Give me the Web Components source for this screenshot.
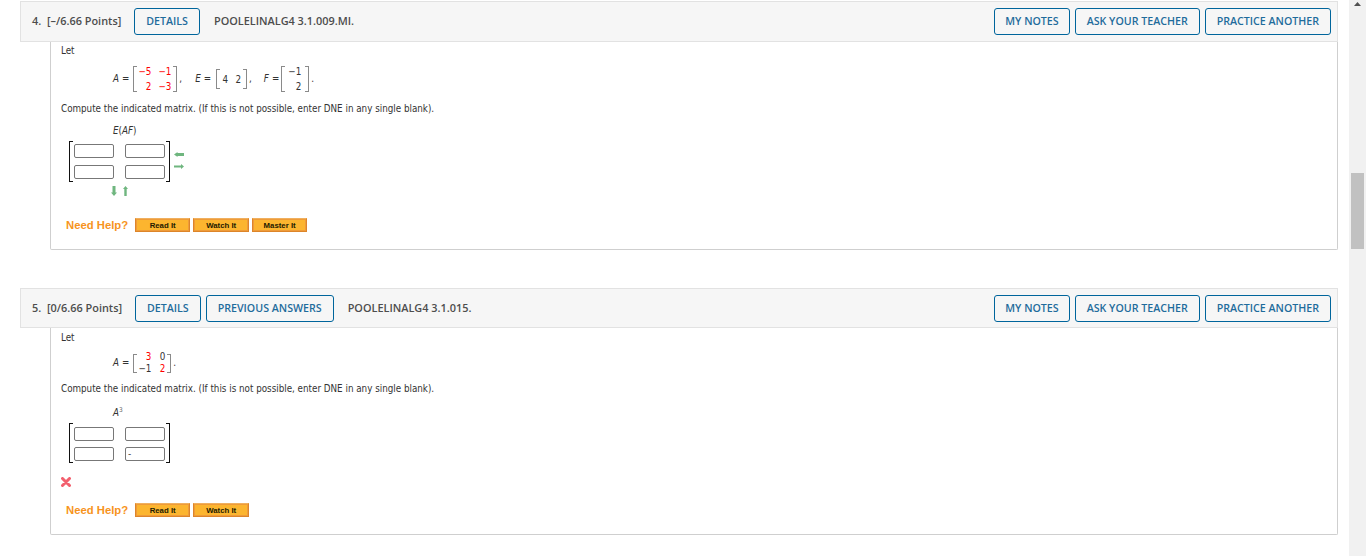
<!DOCTYPE html>
<html>
<head>
<meta charset="utf-8">
<title>Questions</title>
<style>
html, body { margin: 0; padding: 0; height: 556px; overflow: hidden; background: #fff; }
body { display: flex; font-family: "DejaVu Sans", sans-serif; }
main { flex: 1; min-width: 0; }
</style>
</head>
<body>
<main>
  <question-card style="--top:1px;--head:39px;--pad:2px" num="4." points="[–/6.66 Points]" code="POOLELINALG4 3.1.009.MI." body-height="208">
    <plain-text style="--h:17px">Let</plain-text>
    <formula-row style="--h:36px">
      <math-var>A =</math-var><math-matrix style="--gap:4px" tracks="12px 12px" gap="8" pad="6" cells="r:−5,r:−1,r:2,r:−3"></math-matrix><math-sep>,</math-sep>
      <math-var style="--ml:13px">E =</math-var><math-matrix style="--gap:5px" short tracks="6px 6px" gap="7" pad="6" cells="k:4,k:2"></math-matrix><math-sep>,</math-sep>
      <math-var style="--ml:12px">F =</math-var><math-matrix style="--gap:2px" tracks="12px" gap="0" pad="8" cells="k:−1,k:2"></math-matrix><math-sep>.</math-sep>
    </formula-row>
    <plain-text style="--mt:5px">Compute the indicated matrix. (If this is not possible, enter DNE in any single blank).</plain-text>
    <plain-text style="--mt:8px;--ml:52px"><i>E</i>(<i>AF</i>)</plain-text>
    <answer-matrix style="--mt:3px" arrows></answer-matrix>
    <help-row style="--mt:22px" links="Read It,Watch It,Master It"></help-row>
  </question-card>

  <question-card style="--top:38px;--head:38px;--pad:3px" num="5." points="[0/6.66 Points]" code="POOLELINALG4 3.1.015." prev body-height="207">
    <plain-text style="--h:17px">Let</plain-text>
    <formula-row style="--h:30px">
      <math-var>A =</math-var><math-matrix style="--gap:4px" tight tracks="12px 6px" gap="8" pad="6" cells="r:3,k:0,k:−1,r:2"></math-matrix><math-sep>.</math-sep>
    </formula-row>
    <plain-text style="--mt:4px">Compute the indicated matrix. (If this is not possible, enter DNE in any single blank).</plain-text>
    <plain-text style="--mt:10px;--ml:52px"><i>A</i><sup>3</sup></plain-text>
    <answer-matrix style="--mt:3px" last-value="-"></answer-matrix>
    <wrong-mark></wrong-mark>
    <help-row style="--mt:17px" links="Read It,Watch It"></help-row>
  </question-card>
</main>
<page-scrollbar></page-scrollbar>

<script>
// small helper, every element gets its own open shadow root
const shadow = (el, html) => {
  el.attachShadow({ mode: 'open' }).innerHTML = html;
};
const BODY_FONT = '9.75px/14px "DejaVu Sans Condensed", "DejaVu Sans", sans-serif';

class NavButton extends HTMLElement {
  connectedCallback() {
    shadow(this, `<style>
      :host { display: block; }
      a { display: flex; align-items: center; height: 25px; padding: 0 var(--px, 11px); border: 1px solid #00659c; border-radius: 3px;
          color: #1f6c9c; font: 600 10.65px/1 "Open Sans", sans-serif; white-space: nowrap; }
    </style><a><slot></slot></a>`);
  }
}
customElements.define('nav-button', NavButton);

class QuestionCard extends HTMLElement {
  connectedCallback() {
    const prev = this.hasAttribute('prev') ? '<nav-button style="margin-left:5px">PREVIOUS ANSWERS</nav-button>' : '';
    shadow(this, `<style>
      :host { display: block; margin: var(--top) 11px 0 20px; }
      header { display: flex; align-items: center; height: var(--head); padding: 0 6px 0 11px; background: #f6f6f6;
               border: 1px solid #e2e2e2; color: #4d4d4d; font: 600 10.9px/1 "Open Sans", sans-serif; }
      .num { width: 15px; }
      .pts { margin-right: 13px; white-space: nowrap; }
      .code { margin-left: 14px; white-space: nowrap; }
      .right { display: flex; gap: 5px; margin-left: auto; }
      section { margin-left: 30px; height: ${this.getAttribute('body-height')}px; padding: var(--pad) 0 0 10px; box-sizing: border-box;
                border: solid #cfcfcf; border-width: 0 1px 1px 1px; border-radius: 0 0 2px 2px; }
    </style>
    <header>
      <span class="num">${this.getAttribute('num')}</span>
      <span class="pts">${this.getAttribute('points')}</span>
      <nav-button>DETAILS</nav-button>${prev}
      <span class="code">${this.getAttribute('code')}</span>
      <div class="right">
        <nav-button style="--px:10px">MY NOTES</nav-button>
        <nav-button>ASK YOUR TEACHER</nav-button>
        <nav-button>PRACTICE ANOTHER</nav-button>
      </div>
    </header>
    <section><slot></slot></section>`);
  }
}
customElements.define('question-card', QuestionCard);

class PlainText extends HTMLElement {
  connectedCallback() {
    shadow(this, `<style>
      :host { display: block; height: var(--h, 14px); margin: var(--mt, 0) 0 0 var(--ml, 0);
              font: ${BODY_FONT}; color: #333; white-space: nowrap; }
      ::slotted(sup) { font-size: 6.5px; line-height: 0; color: #666; }
    </style><slot></slot>`);
  }
}
customElements.define('plain-text', PlainText);

class FormulaRow extends HTMLElement {
  connectedCallback() {
    shadow(this, `<style>
      :host { display: flex; align-items: center; height: var(--h); margin: 0 0 0 52px; color: #333; font: ${BODY_FONT}; }
    </style><slot></slot>`);
  }
}
customElements.define('formula-row', FormulaRow);

class MathVar extends HTMLElement {
  connectedCallback() {
    const [name, eq] = this.textContent.split(' ');
    shadow(this, `<style>
      :host { display: block; margin-left: var(--ml, 0); white-space: nowrap; }
      i { margin-right: 3px; }
    </style><i>${name}</i>${eq}`);
  }
}
customElements.define('math-var', MathVar);

class MathSep extends HTMLElement {
  connectedCallback() {
    shadow(this, `<style>:host { display: block; margin-left: 2px; }</style><slot></slot>`);
  }
}
customElements.define('math-sep', MathSep);

class MathMatrix extends HTMLElement {
  connectedCallback() {
    const cells = this.getAttribute('cells').split(',').map(c => {
      const [col, val] = c.split(':');
      return `<span style="color:${col === 'r' ? '#f00' : '#333'}">${val}</span>`;
    }).join('');
    const short = this.hasAttribute('short');
    const tight = this.hasAttribute('tight');
    shadow(this, `<style>
      :host { display: block; margin-left: var(--gap); }
      .m { display: grid; grid-template-columns: ${this.getAttribute('tracks')}; column-gap: ${this.getAttribute('gap')}px;
           align-items: center; justify-items: end; align-content: center; white-space: nowrap;
           height: ${short ? 20 : tight ? 19 : 26}px; padding: 0 ${this.getAttribute('pad')}px; position: relative; box-sizing: border-box;
           font: 9.75px/${tight ? 12 : 15}px "DejaVu Sans Condensed", "DejaVu Sans", sans-serif; }
      .m::before, .m::after { content: ""; position: absolute; top: 0; bottom: 0; width: 3px; border: 1px solid #8a8a8a; }
      .m::before { left: 0; border-right: 0; }
      .m::after { right: 0; border-left: 0; }
    </style><div class="m">${cells}</div>`);
  }
}
customElements.define('math-matrix', MathMatrix);

class AnswerMatrix extends HTMLElement {
  connectedCallback() {
    const last = this.getAttribute('last-value') || '';
    const arrows = this.hasAttribute('arrows');
    const side = arrows ? `<div class="side">
        <svg width="10" height="5" viewBox="0 0 10 5"><path d="M0 2.5 3.5 0V1H10V4H3.5V5Z" fill="#6fb67f"/></svg>
        <svg width="10" height="5" viewBox="0 0 10 5"><path d="M0 1.5H7V0L10 2.5 7 5V3.5H0Z" fill="#6fb67f"/></svg>
      </div>` : '';
    const under = arrows ? `<div class="under">
        <svg width="6" height="10" viewBox="0 0 6 10"><path d="M1.5 0H4.5V6.5H6L3 10 0 6.5H1.5Z" fill="#6fb67f"/></svg>
        <svg width="5" height="10" viewBox="0 0 5 10"><path d="M2.5 0 5 3H3.7V10H1.3V3H0Z" fill="#6fb67f"/></svg>
      </div>` : '';
    shadow(this, `<style>
      :host { display: block; margin: var(--mt) 0 0 8px; }
      .row { display: flex; align-items: center; }
      .m { display: grid; grid-template-columns: 40px 40px; column-gap: 11px; row-gap: ${arrows ? 7 : 6}px;
           padding: ${arrows ? '3px 5px' : '4px 5px 2px'}; width: max-content; position: relative; }
      .m::before, .m::after { content: ""; position: absolute; top: 0; bottom: 0; width: 3px; border: 1.5px solid #111; }
      .m::before { left: 0; border-right: 0; }
      .m::after { right: 0; border-left: 0; }
      input { box-sizing: border-box; width: 40px; height: 14px; padding: 0 2px; margin: 0; border: 1px solid #777; border-radius: 2px;
              background: #fff; font: 9px "DejaVu Sans", sans-serif; color: #333; outline: 0; }
      .side { display: flex; flex-direction: column; gap: 7px; margin: -2px 0 0 4px; }
      .side svg, .under svg { display: block; }
      .under { display: flex; gap: 6px; margin: 4px 0 0 42px; }
    </style>
    <div class="row"><div class="m">
      <input><input><input><input value="${last}">
    </div>${side}</div>${under}`);
  }
}
customElements.define('answer-matrix', AnswerMatrix);

class WrongMark extends HTMLElement {
  connectedCallback() {
    shadow(this, `<style>
      :host { display: block; margin: 14px 0 0 0; height: 9px; }
      svg { display: block; }
    </style><svg width="10" height="10" viewBox="0 0 10 10"><path d="M1.5 1.5 8.5 8.5M8.5 1.5 1.5 8.5" stroke="#f2606e" stroke-width="3" stroke-linecap="round"/></svg>`);
  }
}
customElements.define('wrong-mark', WrongMark);

class HelpRow extends HTMLElement {
  connectedCallback() {
    const widths = { 'Read It': 55, 'Watch It': 56, 'Master It': 55 };
    const links = this.getAttribute('links').split(',').map(l =>
      `<b style="width:${widths[l]}px">${l}</b>`).join('');
    shadow(this, `<style>
      :host { display: flex; align-items: center; gap: 3px; margin: var(--mt) 0 0 5px; height: 14px; }
      span { font: bold 11.3px/14px "Liberation Sans", sans-serif; color: #f7941d; margin-right: 4px; white-space: nowrap; }
      b { display: block; box-sizing: border-box; height: 14px; border: 1px solid #dd8529; border-top-color: #f0b05e;
          background: #fcb52f; box-shadow: inset 0 0 0 1px #ee9b3a; text-align: center;
          font: bold 7.8px/13px "Liberation Sans", sans-serif; color: #241b00; }
    </style><span>Need Help?</span>${links}`);
  }
}
customElements.define('help-row', HelpRow);

class PageScrollbar extends HTMLElement {
  connectedCallback() {
    shadow(this, `<style>
      :host { display: block; flex: none; width: 17px; height: 556px; background: #f1f1f1; box-sizing: border-box; padding: 0 2px; }
      svg { display: block; margin: 2px 0 0 3px; }
      div { width: 13px; height: 76px; margin-top: 167px; background: #c1c1c1; }
    </style><svg width="7" height="4" viewBox="0 0 7 4"><path d="M3.5 0 7 4H0Z" fill="#505050"/></svg><div></div>`);
  }
}
customElements.define('page-scrollbar', PageScrollbar);
</script>
</body>
</html>
